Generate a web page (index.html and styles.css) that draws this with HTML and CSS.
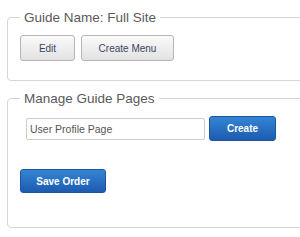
FILE: index.html
```html
<!DOCTYPE html>
<html lang="en">
<head>
    <meta charset="UTF-8">
    <meta name="viewport" content="width=device-width, initial-scale=1.0">
    <title>Guide Editor</title>
    <link rel="stylesheet" href="styles.css">
</head>
<body>

<fieldset class="panel guide-panel">
    <legend>Guide Name: Full Site</legend>
    <div class="actions">
        <button class="btn">Edit</button>
        <button class="btn btn-wide">Create Menu</button>
    </div>
</fieldset>

<fieldset class="panel pages-panel">
    <legend>Manage Guide Pages</legend>
    <div class="new-page">
        <input type="text" class="page-name" value="User Profile Page">
        <button class="btn btn-primary btn-create">Create</button>
    </div>
    <button class="btn btn-primary btn-save">Save Order</button>
</fieldset>

</body>
</html>
```

FILE: styles.css
```css
body {
    font-family: "Liberation Sans", Arial, sans-serif;
    margin: 0;
    padding: 0;
    background-color: #fff;
    overflow: hidden;
}
.panel {
    width: 330px;
    margin: 9px 0 0 7px;
    padding: 0 12px 19px;
    border: 1px solid #d6d6d6;
    border-radius: 4px;
}
.panel legend {
    padding: 0 4px;
    font-size: 13.5px;
    line-height: 17px;
    color: #5a5a5a;
}
.pages-panel {
    margin-top: 9px;
    padding-bottom: 34px;
}
.actions {
    display: flex;
    gap: 6px;
    margin-top: 9px;
}
.btn {
    font-family: "Liberation Sans", Arial, sans-serif;
    font-size: 10px;
    height: 26px;
    padding: 0;
    width: 55px;
    color: #3b4660;
    background: linear-gradient(#fafafa, #e2e2e2);
    border: 1px solid #b5b5b5;
    border-radius: 3px;
}
.btn-wide {
    width: 93px;
}
.btn-primary {
    color: #fff;
    font-weight: bold;
    background: linear-gradient(#3485d3, #1d5bb0);
    border: 1px solid #1b54a0;
}
.new-page {
    display: flex;
    align-items: center;
    gap: 4px;
    margin: 9px 0 0 6px;
}
.page-name {
    box-sizing: border-box;
    width: 179px;
    height: 22px;
    padding: 0 3px;
    font-family: "Liberation Sans", Arial, sans-serif;
    font-size: 10.5px;
    color: #555;
    border: 1px solid #ccc;
    border-radius: 2px;
}
.btn-create {
    width: 67px;
    height: 25px;
}
.btn-save {
    display: block;
    width: 86px;
    height: 24px;
    margin-top: 28px;
}
```
